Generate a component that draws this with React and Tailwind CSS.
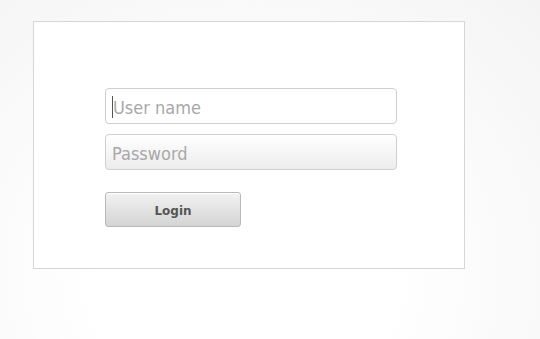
export default function App() {
  return (
    <div className="w-[540px] h-[339px] overflow-hidden bg-[radial-gradient(ellipse_at_45%_80%,#ffffff_0%,#ffffff_35%,#f4f4f4_100%)] pt-[21px] pl-[33px] font-['DejaVu_Sans',sans-serif]">
      <div className="w-[432px] h-[248px] bg-white border border-[#d6d6d6] pt-[66px] pl-[71px] flex flex-col">
        <div className="w-[292px] h-[36px] rounded-[4px] border border-[#cfcfcf] bg-white flex items-center pl-[6px] pt-[3px]">
          <span className="w-px h-[22px] bg-[#555] -mt-[2px]"></span>
          <span className="text-[18px] text-[#a8a8a8] font-['DejaVu_Sans_Condensed','DejaVu_Sans',sans-serif]">User name</span>
        </div>
        <div className="mt-[10px] w-[292px] h-[36px] rounded-[4px] border border-[#cfcfcf] bg-[linear-gradient(#ffffff,#ececec)] flex items-center pl-[6px] pt-[3px]">
          <span className="text-[18px] text-[#a8a8a8] font-['DejaVu_Sans_Condensed','DejaVu_Sans',sans-serif]">Password</span>
        </div>
        <div className="mt-[22px] w-[136px] h-[35px] rounded-[3px] border border-[#b9b9b9] bg-[linear-gradient(#f2f2f2,#d4d4d4)] shadow-[inset_0_1px_0_#fff] flex items-center justify-center pt-[2px]">
          <span className="text-[12px] font-bold text-[#555]">Login</span>
        </div>
      </div>
    </div>
  );
}
